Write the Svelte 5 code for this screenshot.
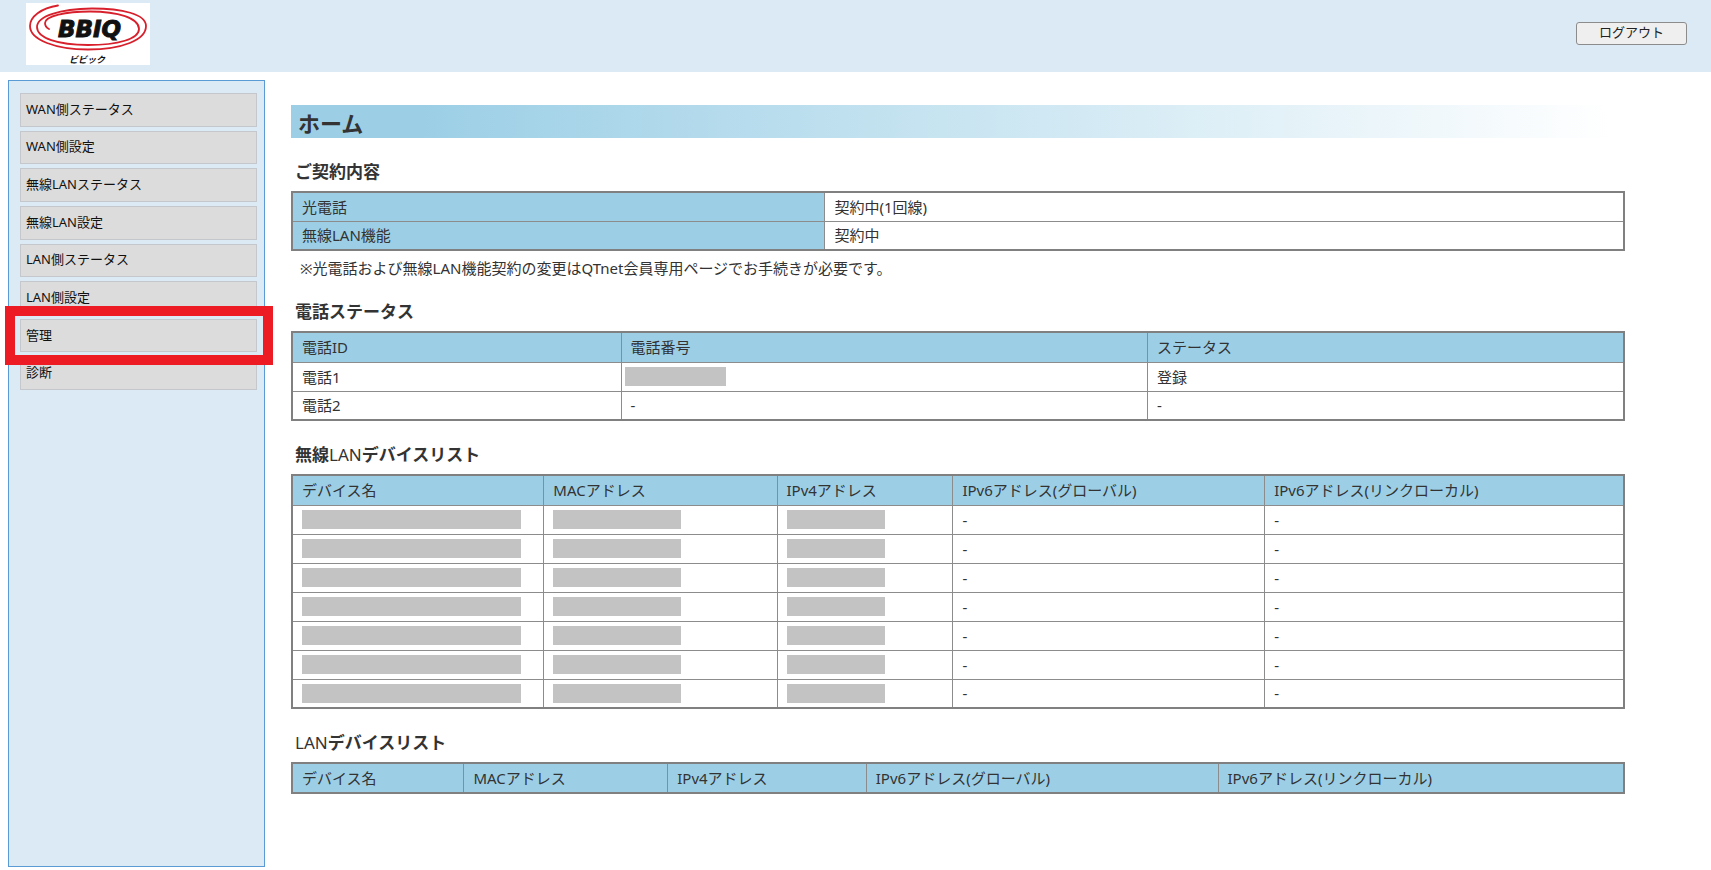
<!--
	Router admin home: header with logo and logout, side menu, and the
	contract / phone / device tables.
-->
<script lang="ts">
	type Cell = string | { mask: 'phone' | 'name' | 'mac' | 'ip' };

	const menu = [
		'WAN側ステータス',
		'WAN側設定',
		'無線LANステータス',
		'無線LAN設定',
		'LAN側ステータス',
		'LAN側設定',
		'管理',
		'診断'
	];
	let marked = $state('管理');

	const contract = [
		['光電話', '契約中(1回線)'],
		['無線LAN機能', '契約中']
	];

	const phoneHead = ['電話ID', '電話番号', 'ステータス'];
	const phones: Cell[][] = [
		['電話1', { mask: 'phone' }, '登録'],
		['電話2', '-', '-']
	];

	const deviceHead = [
		'デバイス名',
		'MACアドレス',
		'IPv4アドレス',
		'IPv6アドレス(グローバル)',
		'IPv6アドレス(リンクローカル)'
	];
	const wirelessDevices: Cell[][] = Array.from({ length: 7 }, () => [
		{ mask: 'name' },
		{ mask: 'mac' },
		{ mask: 'ip' },
		'-',
		'-'
	]);

	// column widths, percent of the table
	const phoneCols = [24.7, 39.5, 35.8];
	const wirelessCols = [18.9, 17.5, 13.2, 23.4, 27];
	const lanCols = [12.9, 15.3, 14.9, 26.4, 30.5];
</script>

{#snippet grid(id: string, cols: number[], head: string[], rows: Cell[][])}
	<table aria-labelledby={id}>
		<colgroup>
			{#each cols as width}
				<col style:width="{width}%" />
			{/each}
		</colgroup>
		<thead>
			<tr>
				{#each head as label}
					<th scope="col">{label}</th>
				{/each}
			</tr>
		</thead>
		<tbody>
			{#each rows as row}
				<tr>
					{#each row as cell}
						{#if typeof cell === 'string'}
							<td>{cell}</td>
						{:else}
							<td class={cell.mask}><span class="bar"></span></td>
						{/if}
					{/each}
				</tr>
			{/each}
		</tbody>
	</table>
{/snippet}

<header>
	<svg class="logo" width="124" height="62" viewBox="26 3 124 62" role="img" aria-label="BBIQ ビビック">
		<rect x="26" y="3" width="124" height="62" fill="#fff" />
		<path
			d="M58 5.500C41 8 30 17 30 26C30 40 56 49.500 88 49.500C122 49.500 146 40 146 26C146 14 122 8.500 92 8.500C60 9 37 16 37 27C37 38 58 45 88 45C118 45 139 39 139 29C139 18 118 11.500 90 11.500C66 11.500 45 16 45 23C45 26 47 28 49 29"
			fill="none"
			stroke="#d8202c"
			stroke-width="1.8"
			stroke-linecap="round"
		/>
		<text class="brand" x="58" y="37">BBIQ</text>
		<text class="kana" x="69" y="63">ビビック</text>
	</svg>
	<button class="logout" type="button">ログアウト</button>
</header>

<div class="page">
	<nav>
		<ul>
			{#each menu as item (item)}
				<li class:marked={item === marked}>
					<a href="#{item}" onclick={() => (marked = item)}>{item}</a>
				</li>
			{/each}
		</ul>
	</nav>

	<main>
		<h1>ホーム</h1>

		<h2 id="contract">ご契約内容</h2>
		<table class="contract" aria-labelledby="contract">
			<tbody>
				{#each contract as [name, value]}
					<tr>
						<th scope="row">{name}</th>
						<td>{value}</td>
					</tr>
				{/each}
			</tbody>
		</table>
		<p>※光電話および無線LAN機能契約の変更はQTnet会員専用ページでお手続きが必要です。</p>

		<h2 id="phone">電話ステータス</h2>
		{@render grid('phone', phoneCols, phoneHead, phones)}

		<h2 id="wireless">無線<span>LAN</span>デバイスリスト</h2>
		{@render grid('wireless', wirelessCols, deviceHead, wirelessDevices)}

		<h2 id="lan"><span>LAN</span>デバイスリスト</h2>
		{@render grid('lan', lanCols, deviceHead, [])}
	</main>
</div>

<style>
	:global(body) {
		margin: 0;
		background: #fff;
		color: #333;
		font-family: 'Noto Sans', 'Noto Sans CJK JP', sans-serif;
	}

	header {
		display: flex;
		align-items: center;
		justify-content: space-between;
		box-sizing: border-box;
		height: 72px;
		padding: 0 24px 5px 26px;
		background: #dceaf6;
	}

	.logo {
		display: block;
	}

	.brand {
		font: italic 700 23px 'DejaVu Sans', sans-serif;
		fill: #111;
		stroke: #111;
		stroke-width: 1;
	}

	.kana {
		font: italic 700 9px 'Noto Sans CJK JP', sans-serif;
		fill: #111;
	}

	.logout {
		width: 111px;
		height: 23px;
		padding: 0 0 2px;
		border: 1px solid #8c8c8c;
		border-radius: 3px;
		background: #efefef;
		color: #222;
		font: 13px/19px 'Noto Sans', 'Noto Sans CJK JP', sans-serif;
	}

	.page {
		display: flex;
		align-items: stretch;
		gap: 26px;
		min-height: calc(100vh - 75px);
		box-sizing: border-box;
		padding: 8px 5% 0 8px;
		margin-bottom: 3px;
	}

	nav {
		flex: none;
		box-sizing: border-box;
		width: 257px;
		padding: 12px 7px 12px 11px;
		border: 1px solid #5b9bd5;
		background: #dceaf6;
	}

	ul {
		display: grid;
		grid-auto-rows: 1fr;
		gap: 4px;
		height: 297px;
		margin: 0;
		padding: 0;
		list-style: none;
	}

	li {
		position: relative;
		display: flex;
	}

	li a {
		flex: 1;
		display: flex;
		align-items: center;
		padding: 0 5px 2px;
		border: 1px solid #c4c8cc;
		background: #dcdcdc;
		color: #111;
		font-size: 13px;
		line-height: 20px;
		text-decoration: none;
	}

	.marked {
		z-index: 1;
	}

	.marked::after {
		content: '';
		position: absolute;
		inset: -13px -16px -13px -15px;
		border: 10px solid #ed1c24;
		pointer-events: none;
	}

	main {
		flex: 1;
		min-width: 0;
		padding-top: 25px;
	}

	h1 {
		margin: 0 0 19px;
		padding: 3px 7px 0;
		background: linear-gradient(to right, #9ccfe6 10%, #fff 99%);
		font-size: 22px;
		font-weight: 700;
		line-height: 30px;
	}

	h2 {
		margin: 0 4px 4px;
		font-size: 17px;
		font-weight: 700;
		line-height: 30px;
		color: #333;
	}

	h2 span {
		font-weight: 400;
	}

	table {
		width: 100%;
		border: 2px solid #808080;
		border-collapse: collapse;
		table-layout: fixed;
	}

	table + h2 {
		margin-top: 19px;
	}

	th,
	td {
		box-sizing: border-box;
		height: 29px;
		padding: 0 9px;
		border: 1px solid #8c8c8c;
		font-size: 15px;
		font-weight: 400;
		line-height: 24px;
		text-align: left;
	}

	th {
		background: #9ccfe6;
	}

	thead th {
		height: 30px;
	}

	.contract th {
		width: 40%;
	}

	.bar {
		display: block;
		height: 19px;
		background: #c3c3c3;
	}

	.phone {
		padding-left: 3px;
	}

	.phone .bar {
		width: 101px;
	}

	.name .bar {
		width: 219px;
	}

	.mac .bar {
		width: 128px;
	}

	.ip .bar {
		width: 98px;
	}

	p {
		margin: 5px 9px 17px;
		font-size: 15px;
		line-height: 24px;
	}
</style>
